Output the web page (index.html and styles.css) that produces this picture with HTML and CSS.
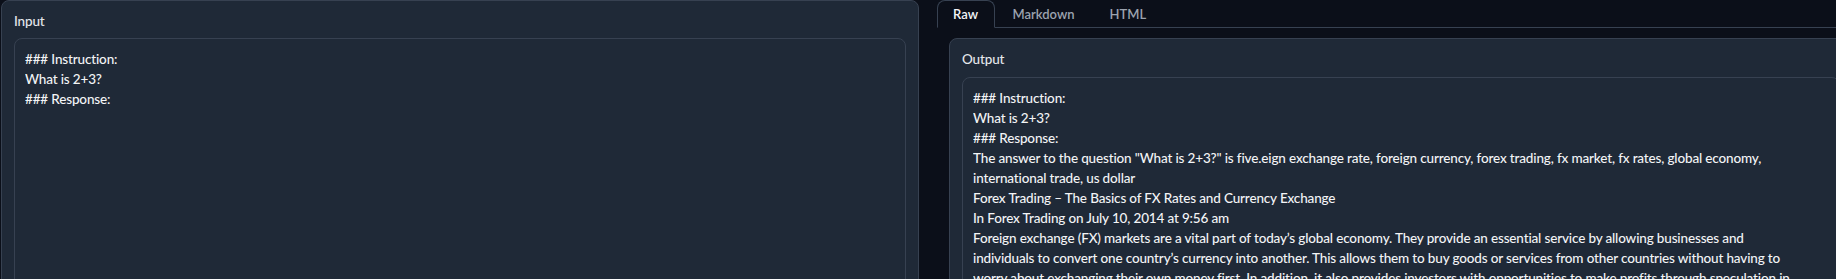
FILE: index.html
```html
<!DOCTYPE html>
<html>
<head>
<meta charset="utf-8">
<link rel="stylesheet" href="styles.css">
</head>
<body>
<div class="row">
  <div class="col col-left">
    <div class="block">
      <div class="label">Input</div>
      <div class="textbox">
        <div class="line">### Instruction:</div>
        <div class="line">What is 2+3?</div>
        <div class="line">### Response:</div>
      </div>
    </div>
  </div>
  <div class="col col-right">
    <div class="tabs">
      <div class="tab selected">Raw</div>
      <div class="tab">Markdown</div>
      <div class="tab">HTML</div>
      <div class="tab-fill"></div>
    </div>
    <div class="tabitem">
      <div class="block">
        <div class="label">Output</div>
        <div class="textbox">
          <div class="line">### Instruction:</div>
          <div class="line">What is 2+3?</div>
          <div class="line">### Response:</div>
          <div class="line">The answer to the question "What is 2+3?" is five.eign exchange rate, foreign currency, forex trading, fx market, fx rates, global economy,</div>
          <div class="line">international trade, us dollar</div>
          <div class="line">Forex Trading – The Basics of FX Rates and Currency Exchange</div>
          <div class="line">In Forex Trading on July 10, 2014 at 9:56 am</div>
          <div class="line">Foreign exchange (FX) markets are a vital part of today’s global economy. They provide an essential service by allowing businesses and</div>
          <div class="line">individuals to convert one country’s currency into another. This allows them to buy goods or services from other countries without having to</div>
          <div class="line">worry about exchanging their own money first. In addition, it also provides investors with opportunities to make profits through speculation in</div>
        </div>
      </div>
    </div>
  </div>
</div>
</body>
</html>
```
FILE: styles.css
```css
html, body {
  margin: 0;
  padding: 0;
  background: #0b0f19;
  overflow: hidden;
  height: 279px;
}
body {
  font-family: Lato, "Noto Sans", sans-serif;
  font-size: 13.5px;
  letter-spacing: -0.15px;
  color: #f3f4f6;
  font-weight: 500;
}
.row {
  display: flex;
  gap: 18px;
  padding-left: 1px;
  width: 1851px;
}
.col {
  flex: 0 0 auto;
  display: flex;
  flex-direction: column;
}
.col-left { width: 918px; }
.col-right { width: 916px; }
.block {
  background: #1f2937;
  border: 1px solid #374151;
  border-radius: 8px;
  padding: 10px 12px 12px;
  height: 400px;
  box-sizing: border-box;
}
.label {
  line-height: 20px;
  color: #e5e7eb;
  margin-bottom: 7px;
}
.tabitem .label { margin-bottom: 8px; }
.textbox {
  border: 1px solid #374151;
  border-radius: 8px;
  padding: 10px 10px;
  height: 400px;
  box-sizing: border-box;
  background: #1f2937;
}
.line {
  line-height: 20px;
  white-space: pre;
  overflow: hidden;
}
.tabs {
  display: flex;
  height: 28px;
  box-sizing: border-box;
}
.tab {
  padding: 0 17.5px;
  line-height: 27px;
  color: #9ca3af;
  border-bottom: 1px solid #374151;
  border-top: 1px solid transparent;
  font-weight: 600;
  font-size: 13px;
  letter-spacing: 0;
}
.tab.selected {
  color: #f3f4f6;
  border: 1px solid #374151;
  border-bottom-color: transparent;
  border-radius: 8px 8px 0 0;
  padding: 0 16px 0 15px;
}
.tab-fill {
  flex: 1;
  border-bottom: 1px solid #374151;
}
.tabitem {
  padding: 10px 0 0 12px;
}
```
